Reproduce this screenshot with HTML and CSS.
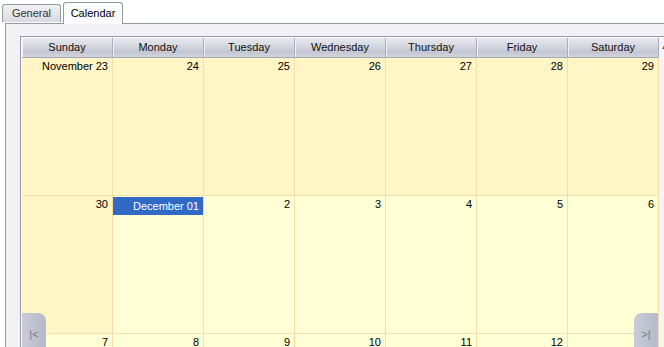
FILE: index.html
```html
<html lang="en">
	<head>
		<meta charset="UTF-8">
		<title>Calendar</title>
		<link rel="stylesheet" href="styles.css">
	</head>
	<body>
		<div class="tabs">
			<div class="tab">General</div>
			<div class="tab active">Calendar</div>
		</div>
		<div class="panel">
			<div class="calendar">
				<div class="head">
					<div class="day-name">Sunday</div>
					<div class="day-name">Monday</div>
					<div class="day-name">Tuesday</div>
					<div class="day-name">Wednesday</div>
					<div class="day-name">Thursday</div>
					<div class="day-name">Friday</div>
					<div class="day-name">Saturday</div>
					<div class="scroll-up">&#9650;</div>
				</div>
				<div class="week">
					<div class="cell other"><span class="num">November 23</span></div>
					<div class="cell other"><span class="num">24</span></div>
					<div class="cell other"><span class="num">25</span></div>
					<div class="cell other"><span class="num">26</span></div>
					<div class="cell other"><span class="num">27</span></div>
					<div class="cell other"><span class="num">28</span></div>
					<div class="cell other"><span class="num">29</span></div>
					<div class="scroll-track"></div>
				</div>
				<div class="week">
					<div class="cell other"><span class="num">30</span></div>
					<div class="cell"><span class="num today">December 01</span></div>
					<div class="cell"><span class="num">2</span></div>
					<div class="cell"><span class="num">3</span></div>
					<div class="cell"><span class="num">4</span></div>
					<div class="cell"><span class="num">5</span></div>
					<div class="cell"><span class="num">6</span></div>
					<div class="scroll-track"></div>
				</div>
				<div class="week">
					<div class="cell"><span class="num">7</span></div>
					<div class="cell"><span class="num">8</span></div>
					<div class="cell"><span class="num">9</span></div>
					<div class="cell"><span class="num">10</span></div>
					<div class="cell"><span class="num">11</span></div>
					<div class="cell"><span class="num">12</span></div>
					<div class="cell"><span class="num">13</span></div>
					<div class="scroll-track"></div>
				</div>
				<div class="nav prev">|&lt;</div>
				<div class="nav next">&gt;|</div>
			</div>
		</div>
	</body>
</html>
```
FILE: styles.css
```css
body {
	margin: 0;
	background-color: white;
	font-family: "Liberation Sans", Arial, sans-serif;
	font-size: 11px;
	color: black;
	overflow: hidden;
	height: 347px;
}
div.tabs {
	display: flex;
	align-items: flex-end;
	height: 23px;
	padding-left: 2px;
	gap: 2px;
}
div.tabs > div.tab {
	height: 17px;
	width: 57px;
	line-height: 17px;
	text-align: center;
	color: #333;
	border: 1px solid #919b9c;
	border-bottom: none;
	border-radius: 3px 3px 0 0;
	background: linear-gradient(#f2f2f5, #d8d8df);
	margin-bottom: 1px;
}
div.tabs > div.tab.active {
	height: 21px;
	width: 58px;
	line-height: 20px;
	color: black;
	background: #fcfcfe;
	margin-bottom: -1px;
	position: relative;
	z-index: 2;
}
div.panel {
	margin-left: 5px;
	height: 331px;
	border-top: 1px solid #919b9c;
	border-left: 1px solid #919b9c;
	background-color: #f1f0f4;
	padding: 12px 0 0 14px;
}
div.calendar {
	position: relative;
	height: 322px;
	overflow: hidden;
	border-top: 1px solid #9a9aa6;
	border-left: 1px solid #9a9aa6;
	padding: 1px 0 0 1px;
	background-color: #fbfbfd;
}
div.head {
	display: grid;
	grid-template-columns: repeat(7, 91px) 10px;
	height: 20px;
}
div.head > div.day-name {
	text-align: center;
	line-height: 18px;
	color: #111;
	background: linear-gradient(#e9e9ef 0%, #d6d8e0 40%, #c4c7d3 75%, #d2d4dc 100%);
	border-right: 1px solid #a9acba;
	box-shadow: inset 1px 0 0 #eef0f4;
	border-bottom: 1px solid #a4a7b5;
}
div.head > div.scroll-up {
	font-size: 6px;
	line-height: 18px;
	padding-left: 2px;
	color: #555;
	background-color: #f4f4f6;
}
div.week {
	display: grid;
	grid-template-columns: repeat(7, 91px) 10px;
	height: 138px;
}
div.week > div.cell {
	background-color: #ffffd5;
	border-right: 1px solid #f6deaa;
	border-bottom: 1px solid #f6deaa;
	text-align: right;
	padding: 0 4px 0 0;
}
div.week > div.cell.other {
	background-color: #fff5c5;
}
div.week > div.cell > span.num {
	display: inline-block;
	line-height: 16px;
}
div.week > div.cell > span.num.today {
	display: block;
	margin: 1px -4px 0 0;
	padding-right: 4px;
	background-color: #316ac5;
	color: white;
	line-height: 18px;
}
div.week > div.scroll-track {
	background-color: #f4f4f6;
}
div.nav {
	position: absolute;
	top: 276px;
	width: 24px;
	height: 40px;
	background: linear-gradient(90deg, #c9ccd8, #b5b9c8);
	color: #777b8c;
	font-size: 11px;
	line-height: 42px;
	text-align: center;
}
div.nav.prev {
	left: 1px;
	border-top-right-radius: 8px;
}
div.nav.next {
	left: 613px;
	border-top-left-radius: 8px;
}
```
